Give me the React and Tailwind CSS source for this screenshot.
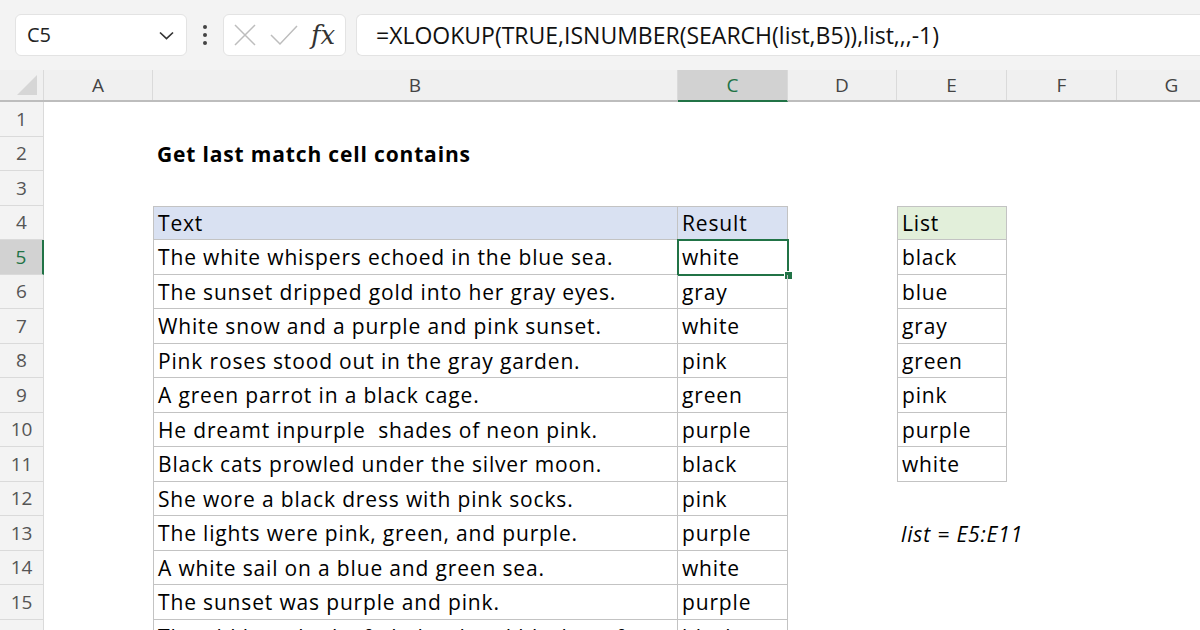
import React from 'react';

const cols = [
    { key: 'A', w: 109 },
    { key: 'B', w: 525 },
    { key: 'C', w: 110 },
    { key: 'D', w: 109 },
    { key: 'E', w: 110 },
    { key: 'F', w: 110 },
    { key: 'G', w: 110 },
];

const rows = [
    ['The white whispers echoed in the blue sea.', 'white'],
    ['The sunset dripped gold into her gray eyes.', 'gray'],
    ['White snow and a purple and pink sunset.', 'white'],
    ['Pink roses stood out in the gray garden.', 'pink'],
    ['A green parrot in a black cage.', 'green'],
    ['He dreamt inpurple  shades of neon pink.', 'purple'],
    ['Black cats prowled under the silver moon.', 'black'],
    ['She wore a black dress with pink socks.', 'pink'],
    ['The lights were pink, green, and purple.', 'purple'],
    ['A white sail on a blue and green sea.', 'white'],
    ['The sunset was purple and pink.', 'purple'],
    ['The old barn had a faded red and black roof.', 'black'],
];

const list = ['black', 'blue', 'gray', 'green', 'pink', 'purple', 'white'];

const cellFont = { fontFamily: '"Open Sans", Lato, sans-serif' };

const NameBox = () => (
    <div className="flex h-[42px] w-[172px] items-center justify-between rounded-md border border-[#e3e3e3] bg-white pl-[11px] pr-[12px]">
        <span className="text-[20px] text-[#222]">C5</span>
        <svg width="15" height="9" viewBox="0 0 15 9" fill="none" stroke="#333" strokeWidth="1.7">
            <path d="M1 1.5 L7.5 7.5 L14 1.5" />
        </svg>
    </div>
);

const FxBox = () => (
    <div className="flex h-[42px] w-[123px] items-center gap-[13px] rounded-md border border-[#e3e3e3] bg-white pl-[9px]">
        <svg width="24" height="24" viewBox="0 0 24 24" fill="none" stroke="#bdbdbd" strokeWidth="1.5">
            <path d="M2 2 L22 22 M22 2 L2 22" />
        </svg>
        <svg width="28" height="22" viewBox="0 0 28 22" fill="none" stroke="#bdbdbd" strokeWidth="1.5">
            <path d="M1 11 L10 20 L27 2" />
        </svg>
        <span className="text-[26px] italic leading-none text-[#333]" style={{ fontFamily: '"DejaVu Serif", "Liberation Serif", serif' }}>
            fx
        </span>
    </div>
);

const Cell = ({ children, className = '' }) => (
    <div className={`flex h-full items-center whitespace-pre px-[4px] pt-[2px] text-[21px] tracking-[0.04em] text-black ${className}`}>
        {children}
    </div>
);

export default function App() {
    const rowCount = 16;

    const renderRow = (r) => {
        const cells = { A: null, B: null, C: null, D: null, E: null, F: null, G: null };
        const cls = { B: '', C: '', E: '' };
        if (r === 2) {
            cells.B = <span className="font-bold">Get last match cell contains</span>;
        }
        if (r === 4) {
            cells.B = 'Text';
            cells.C = 'Result';
            cls.B = 'bg-[#d9e1f2] border border-[#c3c3c3]';
            cls.C = 'bg-[#d9e1f2] border border-l-0 border-[#c3c3c3]';
            cells.E = 'List';
            cls.E = 'bg-[#e2efda] border border-[#c3c3c3]';
        }
        if (r >= 5 && r <= 16) {
            const d = rows[r - 5];
            cells.B = d[0];
            cells.C = d[1];
            cls.B = 'border border-t-0 border-[#c3c3c3] overflow-hidden';
            cls.C = 'border border-t-0 border-l-0 border-[#c3c3c3] overflow-hidden';
        }
        if (r >= 5 && r <= 11) {
            cells.E = list[r - 5];
            cls.E = 'border border-t-0 border-[#c3c3c3]';
        }
        if (r === 13) {
            cells.E = <span className="italic">list = E5:E11</span>;
        }
        const selected = r === 5;
        return (
            <div key={r} className="flex h-[34.5px]">
                <div
                    className={`flex w-[44px] shrink-0 items-center justify-center border-b border-r border-[#dadada] text-[19px] ${
                        selected ? 'border-r-2 border-r-[#217346] bg-[#d2d2d2] text-[#217346]' : 'bg-[#f3f3f3] text-[#555]'
                    }`}
                    style={{ fontFamily: '"Open Sans", sans-serif' }}
                >
                    {r}
                </div>
                {cols.map((c) => (
                    <div key={c.key} className="relative h-full shrink-0" style={{ width: c.w }}>
                        <Cell className={cls[c.key] || ''}>{cells[c.key]}</Cell>
                        {selected && c.key === 'C' && (
                            <>
                                <div className="pointer-events-none absolute -left-px -top-px bottom-[-1px] right-[-1px] border-[2.5px] border-[#217346]" />
                                <div className="absolute bottom-[-5px] right-[-5px] h-[9px] w-[9px] border border-white bg-[#217346]" />
                            </>
                        )}
                    </div>
                ))}
                <div className="flex-1" />
            </div>
        );
    };

    return (
        <div className="h-[630px] w-[1200px] overflow-hidden bg-white" style={cellFont}>
            <div className="flex h-[70px] items-center gap-[10px] bg-[#f3f3f3] pl-[15px]" style={{ fontFamily: '"Open Sans", sans-serif' }}>
                <NameBox />
                <div className="flex w-[16px] flex-col items-center gap-[4px]">
                    <span className="h-[4px] w-[4px] rounded-full bg-[#444]" />
                    <span className="h-[4px] w-[4px] rounded-full bg-[#444]" />
                    <span className="h-[4px] w-[4px] rounded-full bg-[#444]" />
                </div>
                <FxBox />
                <div className="flex h-[42px] flex-1 items-center rounded-l-md border border-r-0 border-[#e3e3e3] bg-white pl-[19px] text-[23px] text-[#111]">
                    =XLOOKUP(TRUE,ISNUMBER(SEARCH(list,B5)),list,,,-1)
                </div>
            </div>
            <div className="flex h-[32px] border-b-2 border-[#bdbdbd] bg-[#f0f0f0]" style={{ fontFamily: '"Open Sans", sans-serif' }}>
                <div className="relative w-[44px] shrink-0 border-r border-[#dadada]">
                    <svg className="absolute bottom-[5px] right-[6px]" width="20" height="20" viewBox="0 0 20 20">
                        <path d="M20 0 L20 20 L0 20 Z" fill="#d6d6d6" />
                    </svg>
                </div>
                {cols.map((c) => (
                    <div
                        key={c.key}
                        className={`flex shrink-0 items-center justify-center border-r border-[#dadada] text-[19px] ${
                            c.key === 'C' ? 'border-b-2 border-b-[#217346] bg-[#d2d2d2] text-[#217346] -mb-[2px]' : 'text-[#444]'
                        }`}
                        style={{ width: c.w }}
                    >
                        {c.key}
                    </div>
                ))}
                <div className="flex-1" />
            </div>
            <div>{Array.from({ length: rowCount }, (_, i) => renderRow(i + 1))}</div>
        </div>
    );
}
